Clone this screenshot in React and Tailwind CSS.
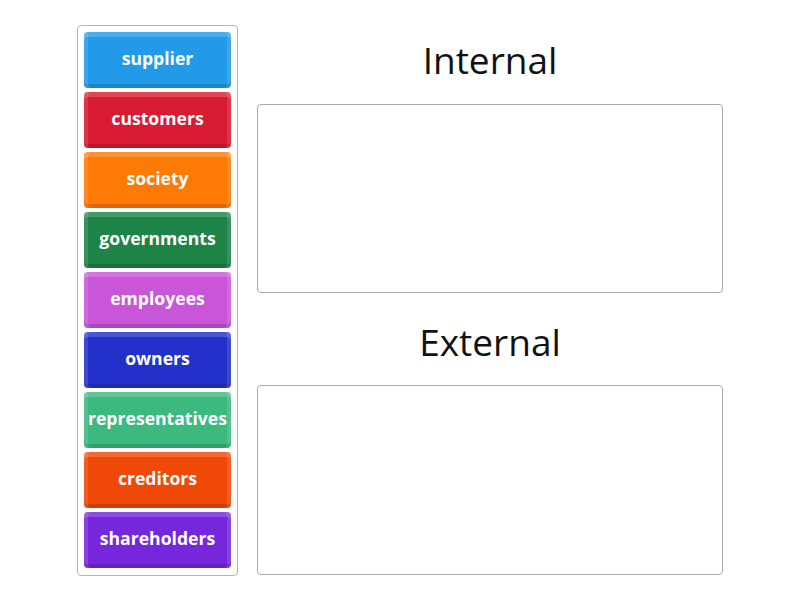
import React from 'react';

const items = [
  { label: 'supplier', bg: 'bg-[#229ae9]' },
  { label: 'customers', bg: 'bg-[#d81b33]' },
  { label: 'society', bg: 'bg-[#fd7a06]' },
  { label: 'governments', bg: 'bg-[#1e8347]' },
  { label: 'employees', bg: 'bg-[#c955d8]' },
  { label: 'owners', bg: 'bg-[#2330c9]' },
  { label: 'representatives', bg: 'bg-[#3cb97f]' },
  { label: 'creditors', bg: 'bg-[#f04807]' },
  { label: 'shareholders', bg: 'bg-[#7627dc]' },
];

const Tile = ({ label, bg }) => (
  <div
    className={`${bg} h-[56px] rounded-[4px] flex items-center justify-center text-white font-bold text-[17.6px] shadow-[inset_0_5px_0_rgba(255,255,255,0.18),inset_4px_0_0_rgba(255,255,255,0.12),inset_-4px_0_0_rgba(255,255,255,0.12),inset_0_-4px_0_rgba(0,0,0,0.14)]`}
  >
    <span className="pb-[4px]">{label}</span>
  </div>
);

const Group = ({ title, top, gap, height }) => (
  <div>
    <div className={`${top} h-[48px] flex items-center justify-center text-[37px] text-[#111] leading-none`}>
      {title}
    </div>
    <div className={`${gap} ${height} border border-[#a9a9a9] rounded-[4px] bg-white`} />
  </div>
);

export default function App() {
  return (
    <div
      className="w-[800px] h-[600px] bg-white flex"
      style={{ fontFamily: '"Open Sans", "Liberation Sans", sans-serif' }}
    >
      <div className="ml-[77px] mt-[25px] w-[161px] h-[551px] border border-[#b5b5b5] rounded-[4px] p-[6px] flex flex-col gap-[4px]">
        {items.map((it) => (
          <Tile key={it.label} {...it} />
        ))}
      </div>

      <div className="ml-[19px] w-[466px] flex flex-col">
        <Group title="Internal" top="mt-[35px]" gap="mt-[21px]" height="h-[189px]" />
        <Group title="External" top="mt-[24px]" gap="mt-[20px]" height="h-[190px]" />
      </div>
    </div>
  );
}
